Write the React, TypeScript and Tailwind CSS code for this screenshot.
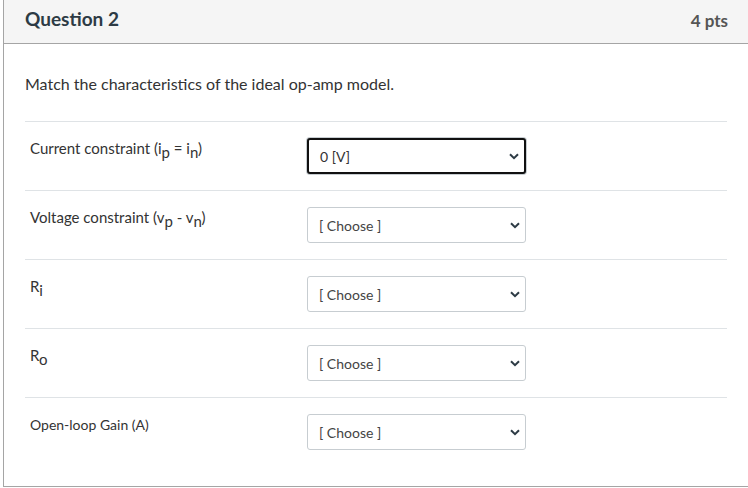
import type { ReactNode } from 'react';

function Sub({ children }: { children: ReactNode }) {
  return <span className="relative top-[4px] text-[15px] leading-none">{children}</span>;
}

function FakeSelect({ value, focused }: { value: string; focused?: boolean }) {
  return (
    <div
      className={
        'flex h-[36px] w-[219px] items-center justify-between rounded-[3px] bg-white pl-[11px] pr-[5px] text-[14px] ' +
        (focused
          ? 'border-2 border-[#111] pl-[10px] pr-[4px] text-[#333] shadow-[0_0_0_1px_#c7cdd1]'
          : 'border border-[#c7cdd1] text-[#444]')
      }
    >
      <span className="whitespace-pre">{value}</span>
      <svg width="10" height="7" viewBox="0 0 10 7" className="text-[#2d3b45]">
        <path d="M1 1.2 L5 5.2 L9 1.2" fill="none" stroke="currentColor" strokeWidth="2" />
      </svg>
    </div>
  );
}

function Row({
  label,
  value,
  focused,
  last,
}: {
  label: ReactNode;
  value: string;
  focused?: boolean;
  last?: boolean;
}) {
  return (
    <div className={'flex border-t border-[#dfe3e6] pt-[16px] ' + (last ? 'h-[88px]' : 'h-[69px]')}>
      <div className="w-[282px] pl-[5px] text-[15px] leading-[20px] text-[#333]">{label}</div>
      <FakeSelect value={value} focused={focused} />
    </div>
  );
}

export default function App() {
  return (
    <div className="h-[488px] w-[748px] overflow-hidden bg-white font-['Lato','Open_Sans',sans-serif]">
      <div className="ml-[3px] h-[487px] border-b border-l border-[#a5a5a5]">
        <div className="flex h-[44px] items-center justify-between border-b border-[#a5a5a5] bg-[#f5f5f5] pb-[4px] pl-[21px] pr-[20px]">
          <h2 className="text-[19px] font-bold text-[#2d3b45]">Question 2</h2>
          <span className="pt-[2px] text-[17px] font-bold text-[#555]">4 pts</span>
        </div>
        <div className="px-[21px] pt-[30px]">
          <p className="mb-[27px] text-[16px] leading-[20px] text-[#333]">
            Match the characteristics of the ideal op-amp model.
          </p>
          <Row
            focused
            value="0 [V]"
            label={
              <span>
                Current constraint (i<Sub>p</Sub> = i<Sub>n</Sub>)
              </span>
            }
          />
          <Row
            value="[ Choose ]"
            label={
              <span>
                Voltage constraint (v<Sub>p</Sub> - v<Sub>n</Sub>)
              </span>
            }
          />
          <Row
            value="[ Choose ]"
            label={
              <span>
                R<Sub>i</Sub>
              </span>
            }
          />
          <Row
            value="[ Choose ]"
            label={
              <span>
                R<Sub>o</Sub>
              </span>
            }
          />
          <Row last value="[ Choose ]" label={<span className="text-[14px]">Open-loop Gain (A)</span>} />
        </div>
      </div>
    </div>
  );
}
